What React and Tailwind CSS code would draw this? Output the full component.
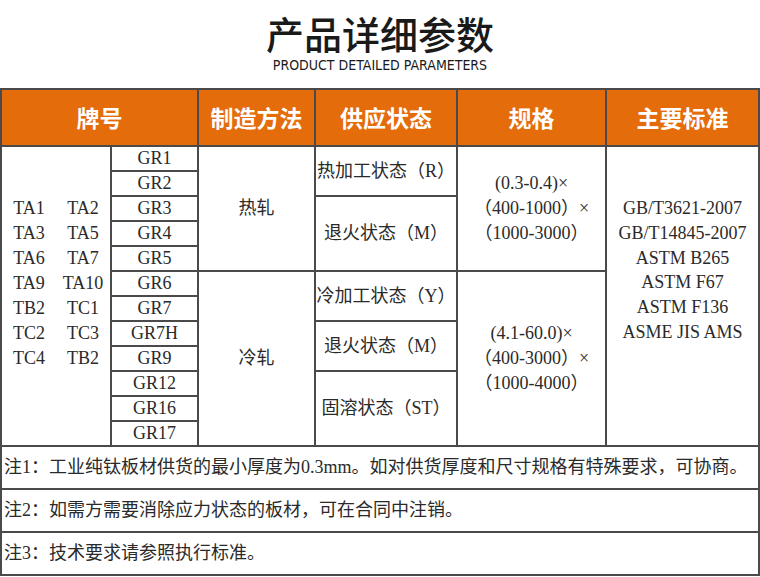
const cjk = '"Noto Sans CJK SC", sans-serif'
const body = '"Liberation Serif", "Noto Sans CJK SC", serif'

const grades = [
  ["GR1", "row-start-2"],
  ["GR2", "row-start-3"],
  ["GR3", "row-start-4"],
  ["GR4", "row-start-5"],
  ["GR5", "row-start-6"],
  ["GR6", "row-start-7"],
  ["GR7", "row-start-8"],
  ["GR7H", "row-start-9"],
  ["GR9", "row-start-10"],
  ["GR12", "row-start-11"],
  ["GR16", "row-start-12"],
  ["GR17", "row-start-13"],
]

const brands = [
  ["TA1", "TA2"],
  ["TA3", "TA5"],
  ["TA6", "TA7"],
  ["TA9", "TA10"],
  ["TB2", "TC1"],
  ["TC2", "TC3"],
  ["TC4", "TB2"],
]

const standards = ["GB/T3621-2007", "GB/T14845-2007", "ASTM B265", "ASTM F67", "ASTM F136", "ASME JIS AMS"]

const HeadCell = ({ className, children }) => (
  <div
    className={`bg-[#e46c0a] text-white font-bold text-[23px] flex items-center justify-center ${className}`}
    style={{ fontFamily: cjk }}
  >
    {children}
  </div>
)

const Cell = ({ className, children }) => (
  <div className={`bg-white flex items-center justify-center text-center ${className}`}>{children}</div>
)

export default function App() {
  return (
    <div className="w-[760px] h-[577px] bg-white overflow-hidden">
      <div className="h-[88px] flex flex-col items-center">
        <div className="mt-[5px] text-[38px] leading-[55px] font-medium text-[#1a1a1a]" style={{ fontFamily: cjk }}>
          产品详细参数
        </div>
        <div
          className="text-[14px] leading-[10px] font-medium text-[#1a1a1a]"
          style={{ fontFamily: '"Liberation Sans Narrow", "DejaVu Sans Condensed", sans-serif' }}
        >
          PRODUCT DETAILED PARAMETERS
        </div>
      </div>

      <div
        className="grid gap-[2px] p-[2px] bg-[#4a4a4a] grid-cols-[108px_85px_115px_140px_147px_151px] grid-rows-[55px_repeat(12,23px)_repeat(3,41px)] text-[18px] leading-[25px] text-[#2a2a2a]"
        style={{ fontFamily: body }}
      >
        <HeadCell className="col-start-1 col-span-2 row-start-1">牌号</HeadCell>
        <HeadCell className="col-start-3 row-start-1">制造方法</HeadCell>
        <HeadCell className="col-start-4 row-start-1">供应状态</HeadCell>
        <HeadCell className="col-start-5 row-start-1">规格</HeadCell>
        <HeadCell className="col-start-6 row-start-1">主要标准</HeadCell>

        <div className="col-start-1 row-start-2 row-span-12 bg-white pt-[49px]">
          {brands.map(([a, b], i) => (
            <div key={i} className="grid grid-cols-2 text-center">
              <span>{a}</span>
              <span>{b}</span>
            </div>
          ))}
        </div>

        {grades.map(([g, row]) => (
          <Cell key={g} className={`col-start-2 ${row}`}>
            {g}
          </Cell>
        ))}

        <Cell className="col-start-3 row-start-2 row-span-5">热轧</Cell>
        <Cell className="col-start-3 row-start-7 row-span-7">冷轧</Cell>

        <Cell className="col-start-4 row-start-2 row-span-2">热加工状态（R）</Cell>
        <Cell className="col-start-4 row-start-4 row-span-3">退火状态（M）</Cell>
        <Cell className="col-start-4 row-start-7 row-span-2">冷加工状态（Y）</Cell>
        <Cell className="col-start-4 row-start-9 row-span-2">退火状态（M）</Cell>
        <Cell className="col-start-4 row-start-11 row-span-3">固溶状态（ST）</Cell>

        <Cell className="col-start-5 row-start-2 row-span-5 flex-col">
          <div>(0.3-0.4)×</div>
          <div>（400-1000）×</div>
          <div>（1000-3000）</div>
        </Cell>
        <Cell className="col-start-5 row-start-7 row-span-7 flex-col">
          <div>(4.1-60.0)×</div>
          <div>（400-3000）×</div>
          <div>（1000-4000）</div>
        </Cell>

        <div className="col-start-6 row-start-2 row-span-12 bg-white pt-[49px] text-center leading-[24.8px]">
          {standards.map((s) => (
            <div key={s}>{s}</div>
          ))}
        </div>

        <div className="col-start-1 col-span-6 row-start-14 bg-white flex items-center pl-[2px]">
          注1：工业纯钛板材供货的最小厚度为0.3mm。如对供货厚度和尺寸规格有特殊要求，可协商。
        </div>
        <div className="col-start-1 col-span-6 row-start-15 bg-white flex items-center pl-[2px]">
          注2：如需方需要消除应力状态的板材，可在合同中注销。
        </div>
        <div className="col-start-1 col-span-6 row-start-16 bg-white flex items-center pl-[2px]">
          注3：技术要求请参照执行标准。
        </div>
      </div>
    </div>
  )
}
